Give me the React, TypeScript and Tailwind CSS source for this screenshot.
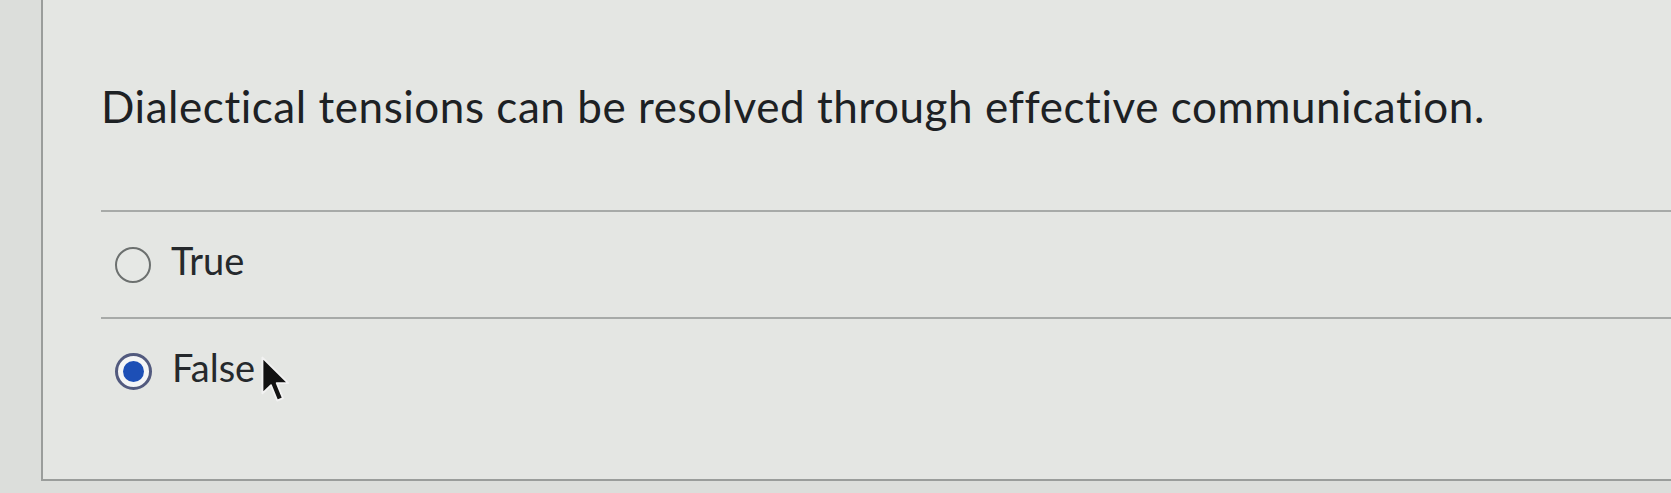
import React from "react";

const font = { fontFamily: "Lato, 'Open Sans', sans-serif" };

function Radio({ checked }: { checked: boolean }) {
  if (checked) {
    return (
      <span className="flex h-[37px] w-[37px] shrink-0 items-center justify-center rounded-full border-[3px] border-[#525a7e] bg-[#f4f5f6]">
        <span className="h-[21px] w-[21px] rounded-full bg-[#1d4fb6]" />
      </span>
    );
  }
  return (
    <span className="h-[36px] w-[36px] shrink-0 rounded-full border-[2px] border-[#6c706f] bg-[#e6e8e5]" />
  );
}

function Pointer() {
  return (
    <svg
      width="31"
      height="48"
      viewBox="0 0 13 20"
      className="pointer-events-none absolute left-[261px] top-[356px]"
    >
      <path
        d="M0.6 0.6 L0.6 15.6 L4.2 12.2 L6.8 18.6 L9.2 17.6 L6.6 11.3 L11.4 11.3 Z"
        fill="#121212"
        stroke="#f2f2f2"
        strokeWidth="0.8"
        strokeLinejoin="round"
      />
    </svg>
  );
}

function Option({ label, checked }: { label: string; checked: boolean }) {
  return (
    <div className="flex h-[105px] items-center gap-[20px] pl-[14px]">
      <Radio checked={checked} />
      <span className="mb-[10px] text-[38px] leading-none text-[#25292c]">{label}</span>
    </div>
  );
}

export default function App() {
  return (
    <div
      className="relative flex h-[493px] w-[1671px] flex-col overflow-hidden bg-[#dcdedb]"
      style={font}
    >
      <div className="flex h-[481px]">
        <div className="w-[41px] shrink-0" />
        <div className="flex-1 border-b-[2px] border-l-[2px] border-[#9a9d9b] bg-[#e4e6e3] pl-[58px]">
          <h1 className="pt-[81px] text-[44px] font-normal leading-[50px] tracking-[0.55px] text-[#1d2124]">
            Dialectical tensions can be resolved through effective communication.
          </h1>
          <div className="mt-[79px] h-[2px] bg-[#a7aaa8]" />
          <Option label="True" checked={false} />
          <div className="h-[2px] bg-[#a7aaa8]" />
          <Option label="False" checked={true} />
        </div>
      </div>
      <Pointer />
    </div>
  );
}
